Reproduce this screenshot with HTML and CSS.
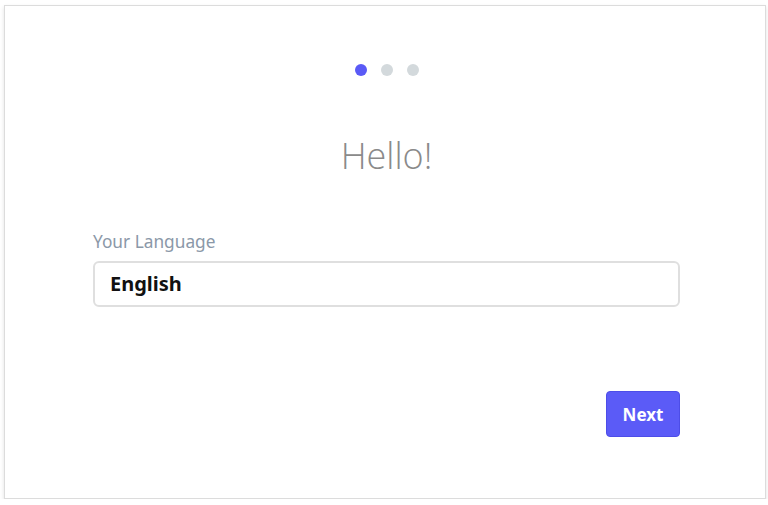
FILE: index.html
```html
<!DOCTYPE html>
<html lang="en">
<head>
    <meta charset="UTF-8">
    <meta name="viewport" content="width=device-width, initial-scale=1.0">
    <title>Setup</title>
    <link rel="stylesheet" href="styles.css">
</head>
<body>

<div class="window">
    <div class="steps">
        <span class="dot active"></span>
        <span class="dot"></span>
        <span class="dot"></span>
    </div>

    <h1>Hello!</h1>

    <form class="setup-form">
        <label for="language">Your Language</label>
        <div class="field">English</div>

        <div class="actions">
            <button type="button" class="next-btn">Next</button>
        </div>
    </form>
</div>

</body>
</html>
```

FILE: styles.css
```css
body {
    font-family: 'Noto Sans', sans-serif;
    background: #ffffff;
    margin: 0;
    padding: 0;
}
.window {
    width: 760px;
    height: 492px;
    margin: 5px 0 0 4px;
    border: 1px solid #dcdcdc;
    box-shadow: 0 2px 4px rgba(0, 0, 0, 0.12);
    background: #ffffff;
    box-sizing: content-box;
    display: flex;
    flex-direction: column;
    align-items: center;
}
.steps {
    display: flex;
    gap: 14px;
    margin-top: 58px;
    margin-left: 3px;
}
.dot {
    width: 12px;
    height: 12px;
    border-radius: 50%;
    background: #d3d9dc;
}
.dot.active {
    background: #5a5af6;
}
h1 {
    font-family: 'Open Sans', sans-serif;
    font-weight: 300;
    font-size: 36px;
    color: #8a8a8a;
    margin: 56px 0 0 3px;
    line-height: 48px;
}
.setup-form {
    width: 587px;
    margin-top: 50px;
    margin-left: 3px;
}
label {
    display: block;
    font-size: 17.3px;
    color: #8b98a8;
    line-height: 24px;
}
.field {
    margin-top: 7px;
    height: 42px;
    border: 2px solid #dfdfdf;
    border-radius: 6px;
    padding: 0 15px;
    font-size: 20px;
    font-weight: 700;
    color: #111111;
    line-height: 42px;
}
.actions {
    display: flex;
    justify-content: flex-end;
    margin-top: 84px;
}
.next-btn {
    width: 74px;
    height: 46px;
    background: #5b5bf7;
    color: #ffffff;
    font-family: 'Noto Sans', sans-serif;
    font-size: 17px;
    font-weight: 700;
    border: 1px solid #4d4de8;
    border-radius: 4px;
    cursor: pointer;
}
```
